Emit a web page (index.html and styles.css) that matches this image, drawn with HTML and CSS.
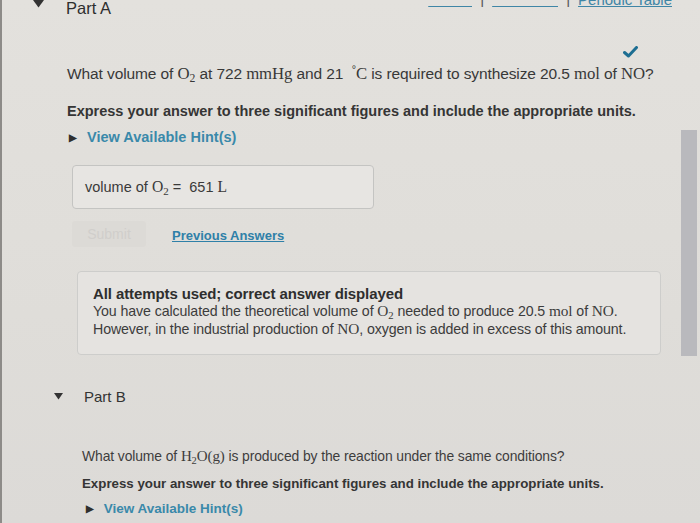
FILE: index.html
```html
<!DOCTYPE html>
<html>
<head>
<meta charset="utf-8">
<link rel="stylesheet" href="styles.css">
</head>
<body>
<div class="page">
  <div class="main">
    <div class="part-head">
      <svg class="caret" width="11" height="8" viewBox="0 0 11 8"><path d="M0 0 H11 L5.5 7.5 Z" fill="#333"/></svg>
      <span class="part-title">Part A</span>
      <div class="toplinks">
        <a class="tl tl1">Review</a><span class="sep">|</span><a class="tl tl2">Constants</a><span class="sep">|</span><a class="tl tl3">Periodic Table</a>
      </div>
    </div>
    <div class="check-row">
      <svg class="check" width="15" height="12" viewBox="0 0 15 12"><path d="M1.5 6.5 L5.5 10 L13.5 1.5" fill="none" stroke="#1d6e92" stroke-width="3" stroke-linecap="round" stroke-linejoin="round"/></svg>
    </div>
    <div class="sec-a">
      <p class="q">What volume of <span class="m">O<sub>2</sub></span> at 722 <span class="m">mmHg</span> and 21 &nbsp;<sup class="deg">&#176;</sup><span class="m">C</span> is required to synthesize 20.5 <span class="m">mol</span> of <span class="m">NO</span>?</p>
      <p class="ex">Express your answer to three significant figures and include the appropriate units.</p>
      <p class="hint"><span class="tri">&#9654;</span> View Available Hint(s)</p>
      <div class="answer"><span class="ans-text">volume of <span class="m">O<sub>2</sub></span> = &nbsp;651 <span class="m">L</span></span></div>
      <div class="actions">
        <span class="submit">Submit</span>
        <a class="prev">Previous Answers</a>
      </div>
      <div class="feedback">
        <div class="fb-title">All attempts used; correct answer displayed</div>
        <div class="fb-text">You have calculated the theoretical volume of <span class="m">O<sub>2</sub></span> needed to produce 20.5 <span class="m">mol</span> of <span class="m">NO</span>.</div>
        <div class="fb-text">However, in the industrial production of <span class="m">NO</span>, oxygen is added in excess of this amount.</div>
      </div>
    </div>
    <div class="part-b-head">
      <svg class="caret-b" width="9" height="7" viewBox="0 0 9 7"><path d="M0 0 H9 L4.5 6.5 Z" fill="#333"/></svg>
      <span class="part-b-title">Part B</span>
    </div>
    <div class="sec-b">
      <p class="qb">What volume of <span class="m">H<sub>2</sub>O(g)</span> is produced by the reaction under the same conditions?</p>
      <p class="exb">Express your answer to three significant figures and include the appropriate units.</p>
      <p class="hintb"><span class="tri">&#9654;</span> View Available Hint(s)</p>
    </div>
  </div>
  <div class="scroll">
    <div class="thumb"></div>
  </div>
</div>
</body>
</html>
```
FILE: styles.css
```css
html, body {
  margin: 0;
  padding: 0;
  background: #e1dfdb;
  overflow: hidden;
}
body {
  font-family: "Liberation Sans", Arial, sans-serif;
  color: #333;
  width: 700px;
  height: 523px;
}
.page {
  display: flex;
  height: 523px;
  border-left: 2px solid #8d8b88;
  box-sizing: border-box;
  background: linear-gradient(180deg, #e3e1dd 0%, #dfddd9 60%, #dcdad7 100%);
}
.main {
  flex: 1;
  min-width: 0;
}
.m {
  font-family: "Liberation Serif", "Times New Roman", serif;
  font-size: 1.08em;
}
sub {
  font-size: 0.7em;
  vertical-align: -0.25em;
  line-height: 0;
}
.deg {
  font-size: 0.7em;
  line-height: 0;
}
p { margin: 0; }
a { cursor: pointer; }

.part-head {
  display: flex;
  align-items: flex-start;
  height: 16px;
  padding-left: 31px;
}
.caret {
  flex: none;
  margin-right: 22px;
}
.part-title {
  font-size: 16.5px;
  line-height: 16px;
  color: #2e2e2e;
}
.toplinks {
  margin-left: auto;
  margin-right: 6px;
  display: flex;
  gap: 8px;
  font-size: 15px;
  line-height: 14px;
  height: 7px;
  overflow: hidden;
  align-items: flex-end;
}
.tl {
  color: #3f86a6;
  text-decoration: underline;
  display: block;
  line-height: 15px;
}
.tl1 { width: 44px; overflow: hidden; color: transparent; text-decoration-color: #3f86a6; }
.tl2 { width: 66px; overflow: hidden; color: transparent; text-decoration-color: #3f86a6; }
.sep { color: #555; line-height: 15px; }

.check-row {
  display: flex;
  justify-content: flex-end;
  padding-right: 40px;
  margin-top: 30px;
  height: 12px;
}
.sec-a {
  padding-left: 65px;
}
.q {
  font-size: 15.5px;
  margin-top: 6px;
  color: #383838;
  letter-spacing: -0.1px;
}
.ex {
  font-size: 14.5px;
  font-weight: bold;
  margin-top: 19px;
  color: #353535;
}
.hint {
  font-size: 14.5px;
  font-weight: bold;
  color: #3a89aa;
  margin-top: 10px;
  padding-left: 2px;
}
.tri {
  font-size: 10px;
  color: #2f2f2f;
  margin-right: 6px;
  position: relative;
  top: -1px;
}
.answer {
  margin-top: 20px;
  margin-left: 5px;
  width: 302px;
  height: 44px;
  box-sizing: border-box;
  border: 1px solid #c4c4c2;
  border-radius: 4px;
  background: #e7e5e2;
  padding-left: 12px;
  display: flex;
  align-items: center;
  font-size: 14.5px;
  color: #3a3a3a;
}
.actions {
  display: flex;
  align-items: center;
  margin-top: 12px;
  margin-left: 5px;
  height: 26px;
  gap: 26px;
}
.submit {
  width: 74px;
  height: 26px;
  background: #dcdad6;
  color: #d0cecb;
  font-size: 14px;
  display: flex;
  align-items: center;
  justify-content: center;
  border-radius: 3px;
}
.prev {
  color: #2f80a8;
  font-weight: bold;
  font-size: 13px;
  text-decoration: underline;
  margin-top: 3px;
}
.feedback {
  margin-top: 24px;
  margin-left: 10px;
  width: 584px;
  height: 84px;
  box-sizing: border-box;
  border: 1px solid #cdcdcb;
  border-radius: 4px;
  background: #e5e3e0;
  padding: 13px 14px 0 15px;
}
.fb-title {
  font-size: 15px;
  font-weight: bold;
  color: #2e2e2e;
  line-height: 17px;
  letter-spacing: -0.1px;
}
.fb-text {
  font-size: 14.2px;
  line-height: 17px;
  color: #3c3c3c;
  letter-spacing: -0.1px;
}
.part-b-head {
  display: flex;
  align-items: center;
  padding-left: 52px;
  margin-top: 32px;
  height: 18px;
}
.caret-b {
  flex: none;
  margin-right: 21px;
}
.part-b-title {
  font-size: 15px;
  color: #333;
}
.sec-b {
  padding-left: 80px;
}
.qb {
  font-size: 13.9px;
  margin-top: 43px;
  color: #3d3d3d;
  letter-spacing: -0.1px;
}
.exb {
  font-size: 13.3px;
  font-weight: bold;
  margin-top: 11px;
  color: #353535;
}
.hintb {
  font-size: 13.5px;
  font-weight: bold;
  color: #3a89aa;
  margin-top: 10px;
  padding-left: 4px;
}
.scroll {
  width: 22px;
  flex: none;
}
.thumb {
  margin-top: 130px;
  margin-left: 3px;
  width: 16px;
  height: 226px;
  background: #b9b9bd;
}
```
